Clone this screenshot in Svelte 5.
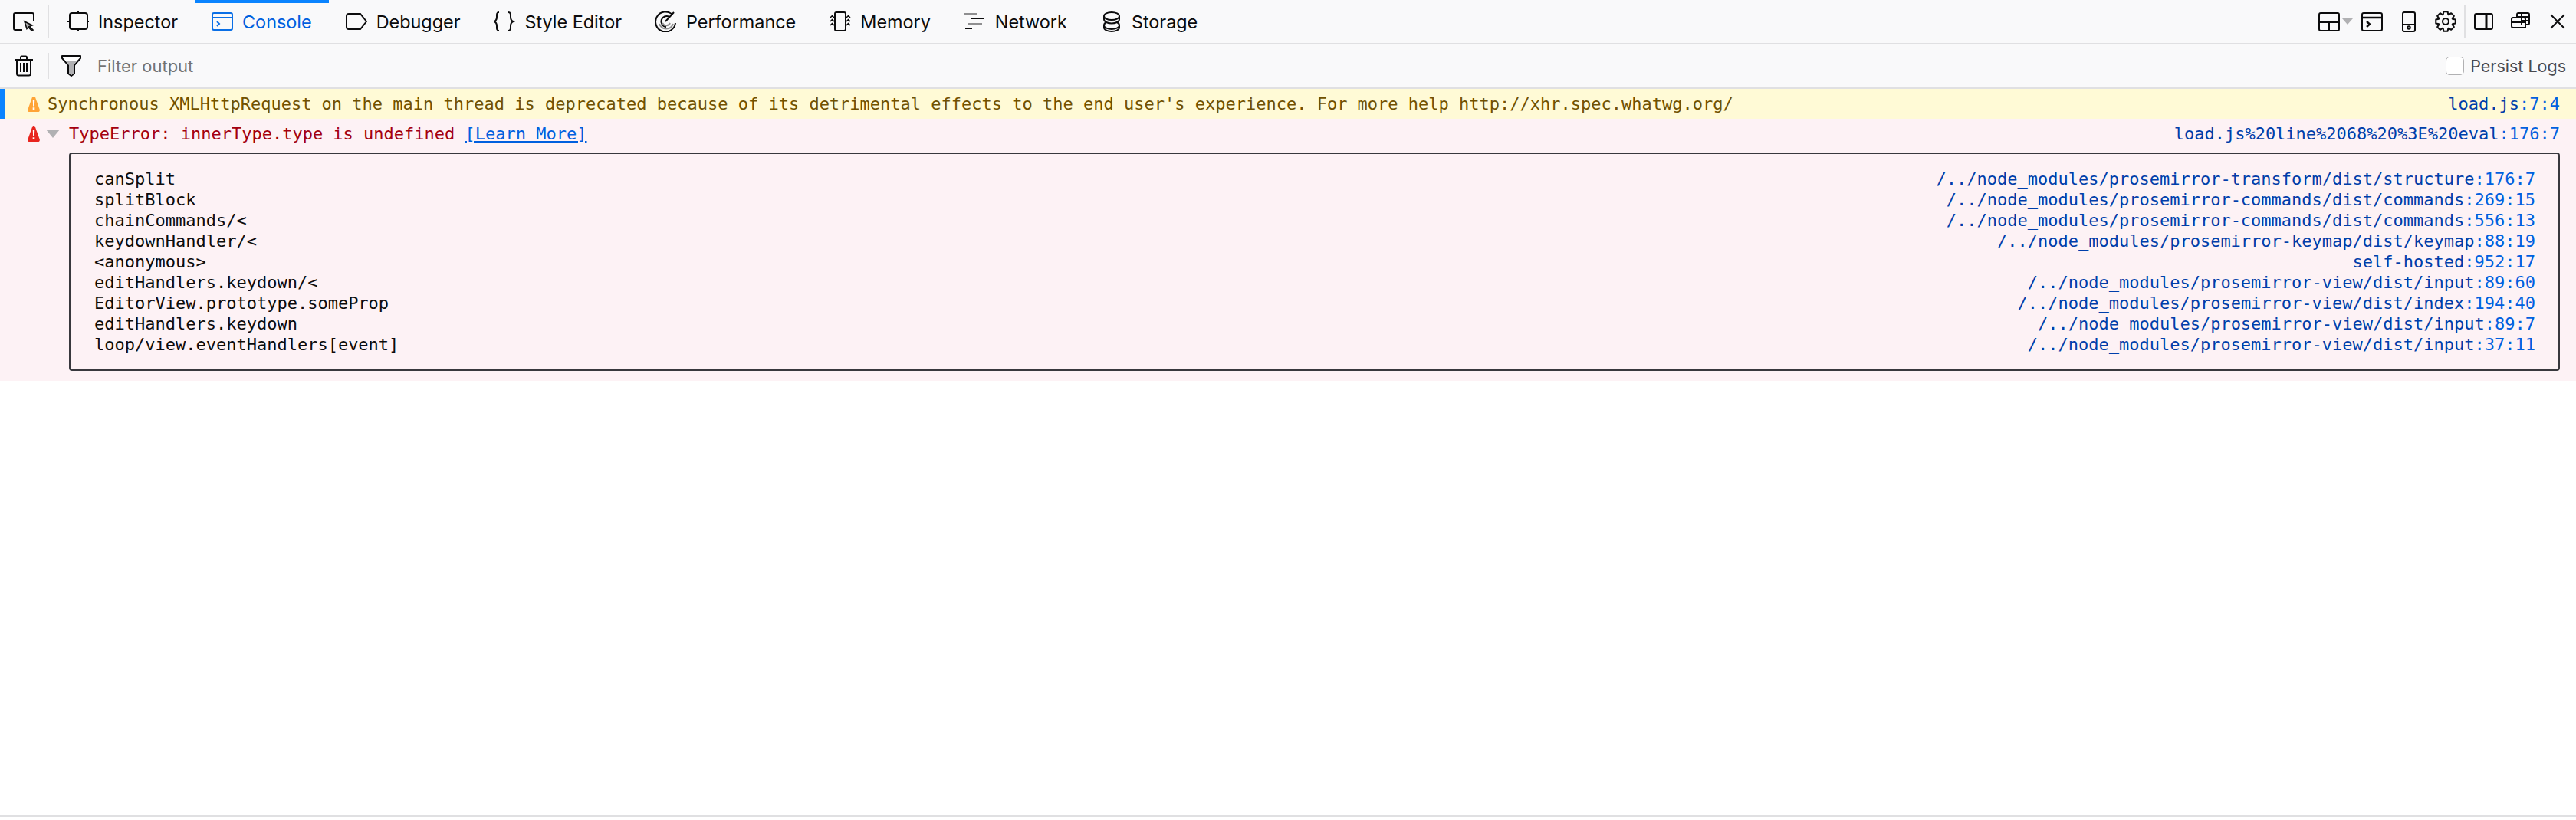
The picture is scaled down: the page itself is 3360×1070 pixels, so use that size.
<script>
  // Firefox devtools console: two toolbars, a warning row and an expanded error row.
  const tabs = ['Inspector', 'Console', 'Debugger', 'Style Editor', 'Performance', 'Memory', 'Network', 'Storage'];

  const stack = [
    ['canSplit', '/../node_modules/prosemirror-transform/dist/structure', ':176:7'],
    ['splitBlock', '/../node_modules/prosemirror-commands/dist/commands', ':269:15'],
    ['chainCommands/<', '/../node_modules/prosemirror-commands/dist/commands', ':556:13'],
    ['keydownHandler/<', '/../node_modules/prosemirror-keymap/dist/keymap', ':88:19'],
    ['<anonymous>', 'self-hosted', ':952:17'],
    ['editHandlers.keydown/<', '/../node_modules/prosemirror-view/dist/input', ':89:60'],
    ['EditorView.prototype.someProp', '/../node_modules/prosemirror-view/dist/index', ':194:40'],
    ['editHandlers.keydown', '/../node_modules/prosemirror-view/dist/input', ':89:7'],
    ['loop/view.eventHandlers[event]', '/../node_modules/prosemirror-view/dist/input', ':37:11']
  ];

  // eight-toothed gear outline around the centre of a 28 box
  function gearPath() {
    let d = '';
    for (let i = 0; i < 8; i++) {
      const a = (i * Math.PI) / 4;
      for (const [r, o] of [[9.5, -0.36], [13, -0.2], [13, 0.2], [9.5, 0.36]]) {
        const x = 14 + r * Math.sin(a + o);
        const y = 14 - r * Math.cos(a + o);
        d += (d ? 'L' : 'M') + x.toFixed(2) + ' ' + y.toFixed(2);
      }
    }
    return d + 'z';
  }
</script>

{#snippet tabIcon(name)}
  <svg class="ico" width="28" height="28" viewBox="0 0 28 28">
    {#if name === 'Inspector'}
      <rect x="3" y="3" width="23" height="21" rx="3" />
      <path d="M14 0v3M14 24v3M0 14h3M26 14h2" />
    {:else if name === 'Console'}
      <rect x="1" y="3" width="26" height="22" rx="2" />
      <path d="M1 9h26M7 14l3 3-3 3" />
    {:else if name === 'Debugger'}
      <path d="M4 4h15l8 10-8 10H4a3 3 0 0 1-3-3V7a3 3 0 0 1 3-3z" />
    {:else if name === 'Style Editor'}
      <path d="M7 2C3.500 2 4 5 4 8c0 3-.5 5-3.500 6C3.500 15 4 17 4 20c0 3-.5 6 3 6M19 2c3.500 0 3 3 3 6 0 3 .5 5 3.500 6-3 1-3.500 3-3.500 6 0 3 .5 6-3 6" />
    {:else if name === 'Performance'}
      <path d="M22 5A13 13 0 1 0 26 16" />
      <path d="M14 21a7 7 0 1 1 4-13M24 2L13 14" />
      <path class="grey" d="M5 17a9.500 9.500 0 0 0 18 0M9 16a5.500 5.500 0 0 0 10 0" />
    {:else if name === 'Memory'}
      <rect x="7" y="2" width="14" height="24" rx="2" />
      <path class="thin" d="M1 9l2.500-2.500L6 9M1 14l2.500-2.500L6 14M1 19l2.500-2.500L6 19M22 9l2.500-2.500L27 9M22 14l2.500-2.500L27 14M22 19l2.500-2.500L27 19" />
    {:else if name === 'Network'}
      <path class="grey" d="M0 4h16M5 17h18" />
      <path d="M9 10h17M1 23h9" />
    {:else}
      <ellipse cx="14" cy="7" rx="10" ry="5" />
      <path d="M4 7v4c0 2 1 3 3 4-2 1-3 2-3 4v3c0 3 5 5 10 5s10-2 10-5v-3c0-2-1-3-3-4 2-1 3-2 3-4V7M7 15c2 1 4 1.500 7 1.500s5-.5 7-1.500M4 19c0 3 5 5 10 5s10-2 10-5" />
    {/if}
  </svg>
{/snippet}

{#snippet warnIcon(color)}
  <svg class="sev" width="16" height="20" viewBox="0 0 16 20">
    <path d="M8 0c1 0 1.700.6 2.200 1.600l5.500 15.200c.5 1.500-.4 3.200-2 3.200H2.300c-1.600 0-2.500-1.700-2-3.200L5.800 1.600C6.300.6 7 0 8 0z" fill={color} />
    <path d="M6.800 5h2.400l-.3 7.500H7.100zM6.700 14.200h2.600v2.800H6.700z" fill="#fff" />
  </svg>
{/snippet}

<div class="page">
  <header class="tabbar">
    <button class="pick">
      <svg class="ico" width="28" height="24" viewBox="0 0 28 24">
        <path d="M12 23H3a2 2 0 0 1-2-2V3a2 2 0 0 1 2-2h22a2 2 0 0 1 2 2v9" />
        <path class="arrow" d="M15 12l10 5-4 1.500 1 .5 4 4-2 .5-4-4-2 2z" />
      </svg>
    </button>
    <nav class="tabs">
      {#each tabs as t}
        <div class="tab" class:active={t === 'Console'}>
          {@render tabIcon(t)}
          <span>{t}</span>
        </div>
      {/each}
    </nav>
    <div class="tools">
      <button class="tool layout">
        <svg class="ico" width="28" height="26" viewBox="0 0 28 26">
          <rect x="1" y="2" width="26" height="23" rx="2" />
          <path d="M1 14h26M14 14v11" />
        </svg>
        <i class="caret"></i>
      </button>
      <button class="tool">
        <svg class="ico" width="28" height="26" viewBox="0 0 28 26">
          <rect x="1" y="2" width="26" height="23" rx="2" />
          <path d="M1 8h26M7 13l4 3.500-4 3.500" stroke-width="2.400" />
        </svg>
      </button>
      <button class="tool">
        <svg class="ico" width="20" height="28" viewBox="0 0 20 28">
          <rect x="2" y="2" width="16" height="25" rx="2" />
          <path d="M2 18h16" />
          <circle cx="10" cy="22" r="1.800" />
        </svg>
      </button>
      <button class="tool">
        <svg class="ico" width="28" height="28" viewBox="0 0 28 28">
          <path d={gearPath()} stroke-linejoin="round" />
          <circle cx="14" cy="14" r="4" />
        </svg>
      </button>
      <span class="sep"></span>
      <button class="tool">
        <svg class="ico" width="26" height="24" viewBox="0 0 26 24">
          <rect x="1" y="2" width="23" height="20" rx="2" />
          <path d="M16 2v20" stroke-width="3" />
        </svg>
      </button>
      <button class="tool">
        <svg class="ico" width="26" height="24" viewBox="0 0 26 24">
          <path d="M8 6V3a2 2 0 0 1 2-2h12a2 2 0 0 1 2 2v11a2 2 0 0 1-2 2h-3M8 6h16M14 11h10M14 1v15" />
          <path d="M3 7h14a2 2 0 0 1 2 2v11H3a2 2 0 0 1-2-2V9a2 2 0 0 1 2-2zM1 13h18" />
        </svg>
      </button>
      <button class="tool">
        <svg class="ico" width="22" height="22" viewBox="0 0 22 22">
          <path d="M2 2l18 18M20 2L2 20" />
        </svg>
      </button>
    </div>
  </header>

  <div class="filterbar">
    <button class="trash">
      <svg class="ico" width="26" height="28" viewBox="0 0 26 28">
        <path d="M1 6h24M9 6V3a1.500 1.500 0 0 1 1.500-1.500h5A1.500 1.500 0 0 1 17 3v3M4 6v18a2.500 2.500 0 0 0 2.500 2.500h13A2.500 2.500 0 0 0 22 24V6M9 10v12M13 10v12M17 10v12" />
      </svg>
    </button>
    <span class="sep short"></span>
    <svg class="funnel" width="26" height="28" viewBox="0 0 26 28">
      <path d="M1 1h24v3l-8 9v11l-4 3-4-3V13L1 4z" fill="#fff" stroke="#0c0c0d" stroke-width="2" stroke-linejoin="round" />
      <path d="M5 7h16l-5 6v11l-3 2-3-2V13z" fill="#b1b1b3" />
    </svg>
    <span class="placeholder">Filter output</span>
    <label class="persist"><span class="box"></span>Persist Logs</label>
  </div>

  <section class="output">
    <div class="msg warn">
      {@render warnIcon('#ffa436')}
      <span class="text">Synchronous XMLHttpRequest on the main thread is deprecated because of its detrimental effects to the end user's experience. For more help http://xhr.spec.whatwg.org/</span>
      <span class="loc">load.js<em>:7:4</em></span>
    </div>
    <div class="msg error">
      {@render warnIcon('#e8251f')}
      <i class="twisty"></i>
      <span class="text">TypeError: innerType.type is undefined <a href="#learn">[Learn More]</a></span>
      <span class="loc">load.js%20line%2068%20%3E%20eval<em>:176:7</em></span>
      <div class="stack">
        {#each stack as [fn, file, pos]}
          <span>{fn}</span>
          <span class="loc">{file}<em>{pos}</em></span>
        {/each}
      </div>
    </div>
  </section>

  <footer class="bottom"></footer>
</div>

<style>
  :global(body) { margin: 0; background: #fff; }
  .page { height: 1070px; display: flex; flex-direction: column; font-family: Inter, "Liberation Sans", sans-serif; color: #0c0c0d; overflow: hidden; }
  button { background: none; border: 0; padding: 0; display: flex; align-items: center; justify-content: center; }

  .ico { fill: none; stroke: #0c0c0d; stroke-width: 2; flex-shrink: 0; display: block; }
  .ico .grey { stroke: #8f8f90; }
  .ico .thin { stroke-width: 1.500; }
  .ico .arrow { fill: #a8a8aa; stroke-width: 1.600; }

  .tabbar { height: 56px; box-sizing: content-box; background: #f9f9fa; border-bottom: 2px solid #e0e0e2; display: flex; align-items: stretch; }
  .pick { width: 64px; padding-right: 0; border-right: 2px solid transparent; position: relative; }
  .pick::after { content: ''; position: absolute; right: -2px; top: 6px; bottom: 6px; width: 2px; background: #e0e0e2; }
  .tabs { display: flex; margin-left: 2px; }
  .tab { display: flex; align-items: center; gap: 12px; padding: 0 22px; font-size: 23.400px; position: relative; }
  .tab.active { color: #0060df; }
  .tab.active .ico { stroke: #0a6fe6; }
  .tab.active::before { content: ''; position: absolute; left: 0; right: 0; top: 0; height: 4px; background: #0a84ff; }

  .tools { margin-left: auto; display: flex; align-items: center; height: 56px; }
  .tool { width: 48px; height: 56px; }
  .tool.layout { width: 52px; justify-content: flex-start; padding-left: 6px; box-sizing: border-box; gap: 3px; }
  .caret { width: 0; height: 0; border: 7px solid transparent; border-top: 8px solid #b1b1b3; border-bottom: 0; }
  .sep { width: 2px; height: 44px; background: #e0e0e2; }

  .filterbar { height: 56px; background: #f9f9fa; border-bottom: 2px solid #e0e0e2; display: flex; align-items: center; }
  .trash { width: 62px; }
  .sep.short { height: 34px; }
  .funnel { margin-left: 16px; flex-shrink: 0; }
  .placeholder { margin-left: 21px; font-size: 22px; color: #737373; }
  .persist { margin-left: auto; margin-right: 13px; display: flex; align-items: center; gap: 8px; font-size: 21.500px; color: #4a4a4f; }
  .box { width: 22px; height: 22px; border: 1px solid #b1b1b3; border-radius: 5px; background: #fff; }

  .output { flex: 1; font-family: "DejaVu Sans Mono", "Liberation Mono", monospace; font-size: 22px; line-height: 27px; }
  .msg { display: grid; grid-template-columns: 16px auto 1fr auto; align-items: center; padding: 6px 21px 6px 36px; box-sizing: border-box; }
  .sev { grid-column: 1; }
  .warn { height: 39px; background: #fffad6; color: #715100; box-shadow: inset 6px 0 0 #0a84ff; }
  .warn .text { grid-column: 2 / 4; margin-left: 10px; }
  .error { background: #fdf2f5; color: #a4000f; padding-bottom: 13px; }
  .error .twisty { grid-column: 2; width: 0; height: 0; margin: 0 12px 0 8px; border: 9px solid transparent; border-top: 11px solid #b1b1b3; border-bottom: 0; }
  .error .text { grid-column: 3; }
  .text { white-space: nowrap; }
  .loc { color: #003eaa; text-align: right; white-space: nowrap; }
  .loc em { font-style: normal; color: #0060df; }
  a { color: #0060df; text-decoration: underline; }

  .stack { grid-column: 1 / -1; margin: 11px 0 0 54px; border: 2px solid #38383d; border-radius: 4px; padding: 19px 30px 19px 31px; display: grid; grid-template-columns: auto 1fr; justify-items: start; color: #0c0c0d; }
  .stack .loc { justify-self: end; }

  .bottom { height: 2px; margin-bottom: 4px; background: #e0e0e2; }
</style>
